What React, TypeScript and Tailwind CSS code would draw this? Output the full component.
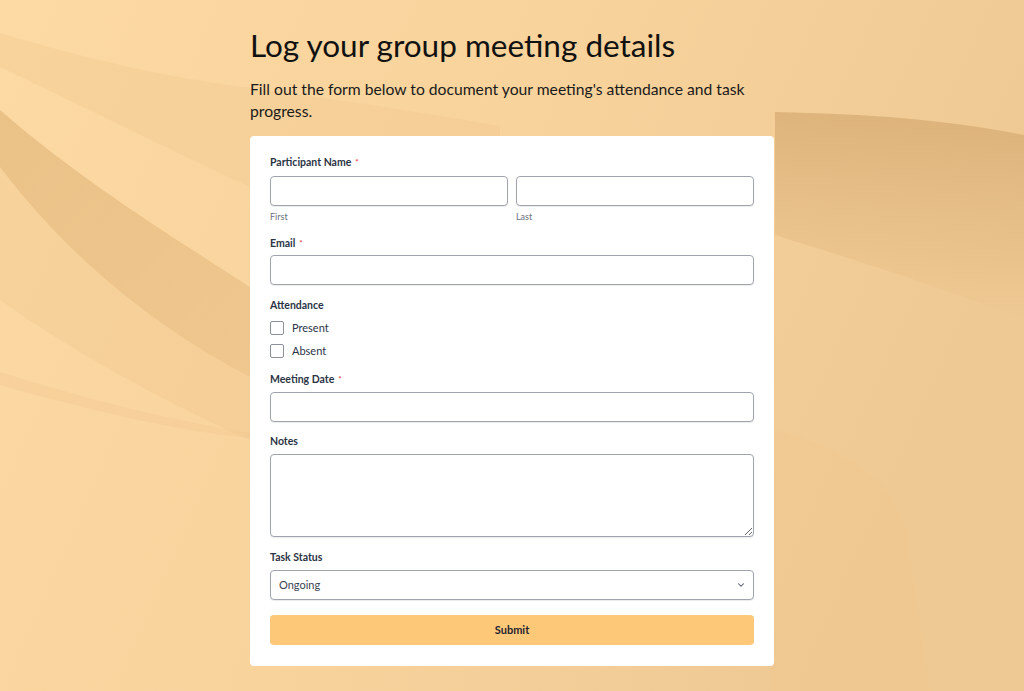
import React from 'react'
import { ChevronDown } from 'lucide-react'

function Label({ text, required }: { text: string; required?: boolean }) {
  return (
    <label className="flex items-center text-[10.5px] font-bold text-[#2b3445] leading-none">
      {text}
      {required && <span className="text-[#e5484d] text-[8px] ml-[4px]">*</span>}
    </label>
  )
}

function Backdrop() {
  return (
    <svg
      className="absolute inset-0 w-full h-full"
      viewBox="0 0 1024 691"
      preserveAspectRatio="none"
    >
      <defs>
        <linearGradient id="base" x1="0" y1="0" x2="1" y2="0.3">
          <stop offset="0" stopColor="#fdd9a3" />
          <stop offset="0.5" stopColor="#f8d39c" />
          <stop offset="1" stopColor="#efc993" />
        </linearGradient>
        <linearGradient id="rightBand" x1="0" y1="0" x2="0" y2="1">
          <stop offset="0" stopColor="#c3955a" stopOpacity="0.45" />
          <stop offset="1" stopColor="#c3955a" stopOpacity="0" />
        </linearGradient>
        <linearGradient id="leftBand" x1="0" y1="0" x2="1" y2="1">
          <stop offset="0" stopColor="#d4a566" stopOpacity="0.45" />
          <stop offset="1" stopColor="#d4a566" stopOpacity="0.2" />
        </linearGradient>
      </defs>
      <rect width="1024" height="691" fill="url(#base)" />
      {/* faint top swoosh */}
      <path d="M0 33 C 90 60 170 78 250 88 C 340 100 420 112 500 126 L 500 300 C 400 250 320 220 250 187 C 160 145 80 105 0 67 Z" fill="#e6bd86" opacity="0.22" />
      {/* dark left swoosh */}
      <path d="M0 110 C 80 180 170 235 250 287 C 300 320 350 350 400 380 L 400 460 C 340 430 300 405 250 377 C 160 330 70 260 0 167 Z" fill="url(#leftBand)" />
      {/* softer band under it */}
      <path d="M0 167 C 70 260 160 330 250 377 L 250 440 C 160 400 70 350 0 300 Z" fill="#e2b77c" opacity="0.18" />
      <path d="M0 372 C 90 400 170 420 250 433 L 250 438 C 170 430 90 410 0 385 Z" fill="#eec58e" opacity="0.3" />
      {/* right swoosh */}
      <path d="M775 112 C 870 114 950 120 1024 135 L 1024 320 C 950 290 870 265 775 235 Z" fill="url(#rightBand)" />
      <path d="M770 428 C 850 450 890 480 905 525 L 930 691 L 770 691 Z" fill="#e2b77c" opacity="0.07" />
    </svg>
  )
}

const inputCls =
  'w-full h-[30px] rounded-[4px] border border-[#a0a4ad] bg-white shadow-[0_1px_1px_rgba(0,0,0,0.08)] outline-none px-2 text-[11px]'

export default function App() {
  return (
    <div className="relative min-h-[691px] w-full overflow-hidden font-['Lato',sans-serif]">
      <Backdrop />
      <div className="relative w-[524px] mx-auto pt-[26px] pb-6">
        <h1 className="text-[31.5px] leading-[38px] text-[#111] font-normal">
          Log your group meeting details
        </h1>
        <p className="mt-[14px] text-[15.7px] leading-[22px] text-[#1a1a1a]">
          Fill out the form below to document your meeting's attendance and task progress.
        </p>

        <form className="mt-[14px] bg-white rounded-[4px] px-5 pt-[21px] pb-[21px] flex flex-col">
          <Label text="Participant Name" required />
          <div className="mt-[8px] grid grid-cols-2 gap-2">
            <div>
              <input className={inputCls} />
              <div className="mt-[4px] text-[9px] leading-[13px] text-[#6b7280]">First</div>
            </div>
            <div>
              <input className={inputCls} />
              <div className="mt-[4px] text-[9px] leading-[13px] text-[#6b7280]">Last</div>
            </div>
          </div>

          <div className="mt-[15px]">
            <Label text="Email" required />
          </div>
          <input className={`${inputCls} mt-[7px]`} />

          <div className="mt-[15px]">
            <Label text="Attendance" />
          </div>
          <div className="mt-[9px] flex flex-col gap-[7px]">
            {['Present', 'Absent'].map((o) => (
              <label key={o} className="flex items-center gap-2 text-[11px] text-[#2b3445]">
                <span className="w-[14px] h-[14px] rounded-[2px] border border-[#8b909a] bg-white" />
                {o}
              </label>
            ))}
          </div>

          <div className="mt-[14px]">
            <Label text="Meeting Date" required />
          </div>
          <input className={`${inputCls} mt-[8px]`} />

          <div className="mt-[14px]">
            <Label text="Notes" />
          </div>
          <textarea className={`${inputCls} mt-[7px] h-[83px] resize-y`} />

          <div className="mt-[15px]">
            <Label text="Task Status" />
          </div>
          <div className="relative mt-[8px]">
            <div className={`${inputCls} flex items-center text-[#3b4252]`}>Ongoing</div>
            <ChevronDown className="absolute right-[8px] top-[10px] w-[10px] h-[10px] text-[#4b5563]" strokeWidth={2.5} />
          </div>

          <button
            type="button"
            className="mt-[15px] h-[30px] w-full rounded-[4px] bg-[#fec879] text-[11px] font-bold text-[#1f2430]"
          >
            Submit
          </button>
        </form>
      </div>
    </div>
  )
}
